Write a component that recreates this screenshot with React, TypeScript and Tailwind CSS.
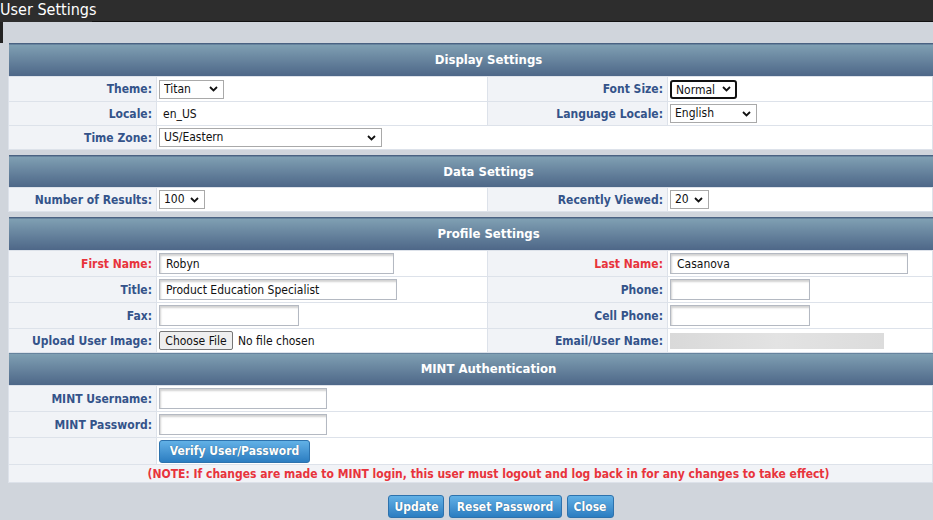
import React from 'react';

const font = { fontFamily: '"DejaVu Sans Condensed", "DejaVu Sans", Tahoma, sans-serif' };

// chevron used on the select boxes
const Chevron = () => (
  <svg width="9" height="6" viewBox="0 0 9 6" className="pointer-events-none absolute right-[6px] top-1/2 -translate-y-1/2">
    <path d="M1 1l3.5 3.5L8 1" fill="none" stroke="#111" strokeWidth="1.8" />
  </svg>
);

const Select = ({ value, width, focused }: { value: string; width: string; focused?: boolean }) => (
  <span className={`relative inline-block align-middle ${width}`}>
    <select
      defaultValue={value}
      className={`h-[19px] w-full appearance-none bg-white pl-[4px] text-[12px] leading-[17px] text-[#111] outline-none ${
        focused ? 'rounded-[3px] border-2 border-[#111]' : 'border border-[#a9a9a9]'
      }`}
      style={font}
    >
      <option>{value}</option>
    </select>
    <Chevron />
  </span>
);

const TextInput = ({ value, width }: { value?: string; width: string }) => (
  <input
    defaultValue={value}
    className={`h-[21px] ${width} border border-[#b4b9c2] bg-white px-[6px] align-middle text-[12px] text-[#111] shadow-[inset_1px_2px_2px_rgba(0,0,0,0.18)] outline-none`}
    style={font}
  />
);

const BlueButton = ({ children, className = '' }: { children: React.ReactNode; className?: string }) => (
  <button
    className={`rounded-[3px] border border-[#2d72ad] bg-gradient-to-b from-[#62b1e6] to-[#2b7dc1] px-[6px] text-[12px] font-bold text-white [text-shadow:0_0_1px_rgba(0,0,0,0.4)] ${className}`}
    style={font}
  >
    {children}
  </button>
);

const Header = ({ title, short }: { title: string; short?: boolean }) => (
  <tr>
    <th
      colSpan={4}
      className={`${short ? 'h-[32px]' : 'h-[33px]'} border-t border-[#4a6282] bg-gradient-to-b from-[#80a0b3] to-[#4d6687] p-0 pl-[36px] text-center text-[13px] font-bold text-white`}
    >
      {title}
    </th>
  </tr>
);

const Label = ({ children, red }: { children: React.ReactNode; red?: boolean }) => (
  <td
    className={`border border-[#dde2ea] bg-[#f1f3f7] pr-[4px] text-right text-[12px] font-bold ${
      red ? 'text-[#e8333c]' : 'text-[#34538a]'
    }`}
  >
    {children}
  </td>
);

const Value = ({ children, colSpan }: { children?: React.ReactNode; colSpan?: number }) => (
  <td colSpan={colSpan} className="border border-[#dde2ea] bg-white pl-[2px] text-[12px] text-[#111]">
    {children}
  </td>
);

const Cols = () => (
  <colgroup>
    <col className="w-[148px]" />
    <col className="w-[331px]" />
    <col className="w-[180px]" />
    <col className="w-[265px]" />
  </colgroup>
);

const Panel = ({ children }: { children: React.ReactNode }) => (
  <table className="w-[924px] table-fixed border-collapse">
    <Cols />
    <tbody>{children}</tbody>
  </table>
);

export default function App() {
  return (
    <div className="h-[520px] w-[933px] overflow-hidden bg-[#d0d5dc]" style={font}>
      {/* title bar */}
      <div className="h-[21px] bg-[#2d2d2d] text-[16px] leading-[19px] text-white">User Settings</div>
      <div className="flex h-[1px]">
        <div className="w-[92px] bg-[#2d2d2d]" />
        <div className="flex-1 bg-[#111]" />
      </div>
      <div className="flex h-[21px]">
        <div className="w-[3px] bg-[#222]" />
      </div>

      <div className="ml-[8px] flex w-[924px] flex-col">
        <Panel>
          <Header title="Display Settings" />
          <tr className="h-[25px]">
            <Label>Theme:</Label>
            <Value>
              <Select value="Titan" width="w-[65px]" />
            </Value>
            <Label>Font Size:</Label>
            <Value>
              <Select value="Normal" width="w-[67px]" focused />
            </Value>
          </tr>
          <tr className="h-[24px]">
            <Label>Locale:</Label>
            <Value>
              <span className="pl-[4px]">en_US</span>
            </Value>
            <Label>Language Locale:</Label>
            <Value>
              <Select value="English" width="w-[87px]" />
            </Value>
          </tr>
          <tr className="h-[24px]">
            <Label>Time Zone:</Label>
            <Value colSpan={3}>
              <Select value="US/Eastern" width="w-[223px]" />
            </Value>
          </tr>
        </Panel>

        <div className="h-[5px]" />

        <Panel>
          <Header title="Data Settings" short />
          <tr className="h-[24px]">
            <Label>Number of Results:</Label>
            <Value>
              <Select value="100" width="w-[46px]" />
            </Value>
            <Label>Recently Viewed:</Label>
            <Value>
              <Select value="20" width="w-[39px]" />
            </Value>
          </tr>
        </Panel>

        <div className="h-[5px]" />

        <Panel>
          <Header title="Profile Settings" />
          <tr className="h-[26px]">
            <Label red>First Name:</Label>
            <Value>
              <TextInput value="Robyn" width="w-[235px]" />
            </Value>
            <Label red>Last Name:</Label>
            <Value>
              <TextInput value="Casanova" width="w-[238px]" />
            </Value>
          </tr>
          <tr className="h-[26px]">
            <Label>Title:</Label>
            <Value>
              <TextInput value="Product Education Specialist" width="w-[238px]" />
            </Value>
            <Label>Phone:</Label>
            <Value>
              <TextInput width="w-[140px]" />
            </Value>
          </tr>
          <tr className="h-[26px]">
            <Label>Fax:</Label>
            <Value>
              <TextInput width="w-[140px]" />
            </Value>
            <Label>Cell Phone:</Label>
            <Value>
              <TextInput width="w-[140px]" />
            </Value>
          </tr>
          <tr className="h-[24px]">
            <Label>Upload User Image:</Label>
            <Value>
              <span className="inline-flex items-center gap-[5px] align-middle">
                <span className="inline-flex h-[19px] w-[74px] items-center justify-center rounded-[2px] border border-[#767676] bg-[#efefef] text-[12px] text-[#111]">
                  Choose File
                </span>
                <span className="text-[12px]">No file chosen</span>
              </span>
            </Value>
            <Label>Email/User Name:</Label>
            <Value>
              <span className="inline-block h-[16px] w-[214px] bg-gradient-to-r from-[#d9d9d9] via-[#e3e3e3] to-[#dcdcdc] align-middle" />
            </Value>
          </tr>
          <Header title="MINT Authentication" />
          <tr className="h-[26px]">
            <Label>MINT Username:</Label>
            <Value colSpan={3}>
              <TextInput width="w-[168px]" />
            </Value>
          </tr>
          <tr className="h-[26px]">
            <Label>MINT Password:</Label>
            <Value colSpan={3}>
              <TextInput width="w-[168px]" />
            </Value>
          </tr>
          <tr className="h-[27px]">
            <td className="border border-[#dde2ea] bg-[#f1f3f7]" />
            <Value colSpan={3}>
              <BlueButton className="h-[23px] w-[151px]">Verify User/Password</BlueButton>
            </Value>
          </tr>
          <tr className="h-[18px]">
            <td
              colSpan={4}
              className="border border-[#dde2ea] bg-[#f1f3f7] pl-[36px] text-center text-[12px] font-bold leading-[16px] text-[#e8333c]"
            >
              (NOTE: If changes are made to MINT login, this user must logout and log back in for any changes to take effect)
            </td>
          </tr>
        </Panel>
      </div>

      <div className="mt-[12px] flex justify-center gap-[5px] pl-[68px]">
        <BlueButton className="h-[23px] w-[56px]">Update</BlueButton>
        <BlueButton className="h-[23px] w-[113px]">Reset Password</BlueButton>
        <BlueButton className="h-[23px] w-[47px]">Close</BlueButton>
      </div>
    </div>
  );
}
